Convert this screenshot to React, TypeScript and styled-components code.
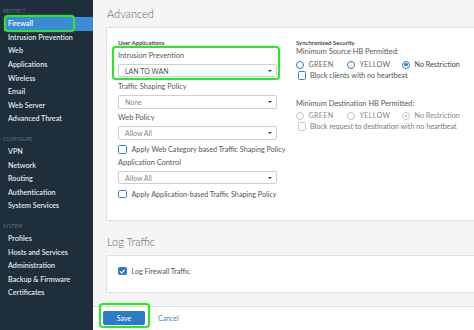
import styled, { createGlobalStyle } from "styled-components";

const GlobalStyle = createGlobalStyle`
  html, body {
    margin: 0;
    padding: 0;
  }
  body {
    width: 474px;
    height: 330px;
    overflow: hidden;
    background: #f5f5f5;
    font-family: Lato, "Open Sans", "Liberation Sans", sans-serif;
  }
  * {
    box-sizing: border-box;
  }
`;

const navGroups = [
  {
    label: "PROTECT",
    items: [
      "Firewall",
      "Intrusion Prevention",
      "Web",
      "Applications",
      "Wireless",
      "Email",
      "Web Server",
      "Advanced Threat",
    ],
  },
  {
    label: "CONFIGURE",
    items: ["VPN", "Network", "Routing", "Authentication", "System Services"],
  },
  {
    label: "SYSTEM",
    items: [
      "Profiles",
      "Hosts and Services",
      "Administration",
      "Backup & Firmware",
      "Certificates",
    ],
  },
];

const App = () => {
  return (
    <>
      <GlobalStyle />
      <Page>
        <Sidebar>
          {navGroups.map((group, gi) => (
            <div key={group.label}>
              <NavLabel $first={gi === 0}>{group.label}</NavLabel>
              {group.items.map((item) =>
                item === "Firewall" ? (
                  <NavItem key={item} $active>
                    {item}
                    <Callout $inset="-2px 18px -1.5px 0" />
                  </NavItem>
                ) : (
                  <NavItem key={item}>{item}</NavItem>
                )
              )}
            </div>
          ))}
        </Sidebar>

        <Main>
          <SectionTitle>Advanced</SectionTitle>
          <Card>
            <Columns>
              <Column>
                <BlockTitle>User Applications</BlockTitle>
                <Marked>
                  <FieldLabel $gap={3.7}>Intrusion Prevention</FieldLabel>
                  <Select $dark>
                    LAN TO WAN
                    <Arrow />
                  </Select>
                  <Callout $inset="-1.7px -3px -2.5px -6.3px" />
                </Marked>
                <FieldLabel>Traffic Shaping Policy</FieldLabel>
                <Select>
                  None
                  <Arrow />
                </Select>
                <FieldLabel>Web Policy</FieldLabel>
                <Select>
                  Allow All
                  <Arrow />
                </Select>
                <CheckRow $gap={4.7}>
                  <Box />
                  Apply Web Category based Traffic Shaping Policy
                </CheckRow>
                <FieldLabel $gap={3.4}>Application Control</FieldLabel>
                <Select>
                  Allow All
                  <Arrow />
                </Select>
                <CheckRow $gap={4.7}>
                  <Box />
                  Apply Application-based Traffic Shaping Policy
                </CheckRow>
              </Column>

              <Column>
                <BlockTitle>Synchronized Security</BlockTitle>
                <FieldLabel $gap={0} $tight>
                  Minimum Source HB Permitted:
                </FieldLabel>
                <RadioRow $gap={3}>
                  <RadioOption $caps>
                    <Radio />
                    GREEN
                  </RadioOption>
                  <RadioOption $caps>
                    <Radio />
                    YELLOW
                  </RadioOption>
                  <RadioOption>
                    <Radio $checked />
                    No Restriction
                  </RadioOption>
                </RadioRow>
                <CheckRow $indent>
                  <Box />
                  Block clients with no heartbeat
                </CheckRow>

                <FieldLabel $gap={19} $tight>
                  Minimum Destination HB Permitted:
                </FieldLabel>
                <RadioRow $gap={2}>
                  <RadioOption $caps $disabled>
                    <Radio $disabled />
                    GREEN
                  </RadioOption>
                  <RadioOption $caps $disabled>
                    <Radio $disabled />
                    YELLOW
                  </RadioOption>
                  <RadioOption $disabled>
                    <Radio $disabled $checked />
                    No Restriction
                  </RadioOption>
                </RadioRow>
                <CheckRow $indent $disabled>
                  <Box $disabled />
                  Block request to destination with no heartbeat
                </CheckRow>
              </Column>
            </Columns>
          </Card>

          <SectionTitle $low>Log Traffic</SectionTitle>
          <LogCard>
            <CheckRow>
              <Box $checked>
                <svg width="7" height="7" viewBox="0 0 10 10">
                  <path
                    d="M2 5.2 L4.2 7.3 L8.2 2.8"
                    fill="none"
                    stroke="#fff"
                    strokeWidth="1.8"
                    strokeLinecap="round"
                    strokeLinejoin="round"
                  />
                </svg>
              </Box>
              Log Firewall Traffic
            </CheckRow>
          </LogCard>

          <Footer>
            <Marked>
              <SaveButton>Save</SaveButton>
              <Callout $inset="-8px -5px -3px -4px" />
            </Marked>
            <CancelLink>Cancel</CancelLink>
          </Footer>
        </Main>
      </Page>
    </>
  );
};
export default App;

// styles
const Page = styled.div`
  display: grid;
  grid-template-columns: 93px 1fr;
  width: 474px;
  height: 330px;
`;

const Sidebar = styled.nav`
  background: #1e2e3b;
  padding-top: 5px;
  overflow: hidden;
`;

const NavLabel = styled.div<{ $first?: boolean }>`
  height: 12px;
  margin-top: ${(p) => (p.$first ? 0 : 7)}px;
  padding-left: 3px;
  display: flex;
  align-items: center;
  font-size: 4.8px;
  letter-spacing: 0.2px;
  color: #647482;
`;

const NavItem = styled.div<{ $active?: boolean }>`
  position: relative;
  height: 13.6px;
  margin-left: 4px;
  padding-left: 4px;
  display: flex;
  align-items: center;
  font-size: 7.2px;
  font-weight: 600;
  white-space: nowrap;
  color: ${(p) => (p.$active ? "#ffffff" : "#e3e8ec")};
  background: ${(p) => (p.$active ? "#3a8bd4" : "transparent")};
`;

const Callout = styled.span<{ $inset: string }>`
  position: absolute;
  inset: ${(p) => p.$inset};
  border: 2px solid #34e034;
  border-radius: 4px;
  box-shadow: 0 0 2px rgba(60, 230, 60, 0.6);
  pointer-events: none;
`;

const Main = styled.main`
  display: flex;
  flex-direction: column;
  background: #f5f5f5;
  min-width: 0;
`;

const SectionTitle = styled.h2<{ $low?: boolean }>`
  margin: 0;
  height: ${(p) => (p.$low ? 34 : 27)}px;
  padding: ${(p) => (p.$low ? "6px" : "0")} 0 0 14px;
  display: flex;
  align-items: center;
  font-size: 11px;
  font-weight: 300;
  color: #5d5d5d;
`;

const Card = styled.section`
  margin-left: 13px;
  height: 194px;
  padding: 10.3px 0 0 11px;
  background: #ffffff;
  border: 1px solid #e2e2e2;
  border-right: none;
`;

const Columns = styled.div`
  display: grid;
  grid-template-columns: 159px 1fr;
  column-gap: 19px;
`;

const Column = styled.div`
  display: flex;
  flex-direction: column;
`;

const BlockTitle = styled.div`
  height: 9px;
  line-height: 9px;
  font-size: 6px;
  font-weight: 600;
  color: #333;
  white-space: nowrap;
`;

const Marked = styled.div`
  position: relative;
  display: flex;
  flex-direction: column;
`;

const FieldLabel = styled.div<{ $gap?: number; $tight?: boolean }>`
  height: ${(p) => (p.$tight ? 9 : 10)}px;
  line-height: ${(p) => (p.$tight ? 9 : 10)}px;
  margin-top: ${(p) => p.$gap ?? 4.7}px;
  font-size: 7.4px;
  color: #585858;
  white-space: nowrap;
`;

const Select = styled.div<{ $dark?: boolean }>`
  position: relative;
  height: 13.5px;
  margin-top: 3px;
  padding-left: 6px;
  display: flex;
  align-items: center;
  background: #fff;
  border: 1px solid #cfcfcf;
  border-radius: 2px;
  font-size: 7px;
  color: ${(p) => (p.$dark ? "#555" : "#888")};
`;

const Arrow = styled.span`
  position: absolute;
  right: 4px;
  top: 50%;
  margin-top: -1px;
  border-left: 2.2px solid transparent;
  border-right: 2.2px solid transparent;
  border-top: 2.6px solid #3a3a3a;
`;

const CheckRow = styled.div<{
  $gap?: number;
  $disabled?: boolean;
  $indent?: boolean;
}>`
  height: 10px;
  margin-top: ${(p) => p.$gap ?? 0}px;
  padding-left: ${(p) => (p.$indent ? 1.5 : 0)}px;
  display: flex;
  align-items: center;
  gap: ${(p) => (p.$indent ? 4 : 5)}px;
  font-size: 7.2px;
  color: ${(p) => (p.$disabled ? "#7a7a7a" : "#555")};
  white-space: nowrap;
`;

const Box = styled.span<{ $checked?: boolean; $disabled?: boolean }>`
  flex: none;
  width: 8.5px;
  height: 8.5px;
  display: flex;
  align-items: center;
  justify-content: center;
  border-radius: 1.5px;
  border: 1px solid ${(p) => (p.$disabled ? "#c9c9c9" : "#3a80c4")};
  background: ${(p) => (p.$checked ? "#2b78c2" : "#fff")};
`;

const RadioRow = styled.div<{ $gap: number }>`
  height: 11px;
  margin-top: ${(p) => p.$gap}px;
  display: grid;
  grid-template-columns: 51px 55px auto;
  align-items: center;
`;

const RadioOption = styled.div<{ $disabled?: boolean; $caps?: boolean }>`
  display: flex;
  align-items: center;
  gap: 4.5px;
  font-size: 7.2px;
  letter-spacing: ${(p) => (p.$caps ? 0.3 : 0)}px;
  white-space: nowrap;
  color: ${(p) => (p.$disabled ? "#8a8a8a" : p.$caps ? "#666" : "#444")};
`;

const Radio = styled.span<{ $checked?: boolean; $disabled?: boolean }>`
  flex: none;
  width: 8px;
  height: 8px;
  border-radius: 50%;
  display: flex;
  align-items: center;
  justify-content: center;
  border: 1.2px solid ${(p) => (p.$disabled ? "#c4c4c4" : "#2f7cc2")};
  background: #fff;

  &::after {
    content: "";
    display: ${(p) => (p.$checked ? "block" : "none")};
    width: ${(p) => (p.$disabled ? 2 : 3.4)}px;
    height: ${(p) => (p.$disabled ? 2 : 3.4)}px;
    border-radius: 50%;
    background: ${(p) => (p.$disabled ? "#b5b5b5" : "#2f7cc2")};
  }
`;

const LogCard = styled.section`
  margin-left: 13px;
  height: 38px;
  padding: 10px 0 0 11px;
  background: #ffffff;
  border: 1px solid #e2e2e2;
  border-right: none;
`;

const Footer = styled.footer`
  flex: 1;
  margin-top: 13px;
  padding: 4px 0 0 10px;
  display: flex;
  align-items: flex-start;
  gap: 13px;
  background: #ffffff;
  border-top: 1px solid #e0e0e0;
`;

const SaveButton = styled.button`
  width: 42px;
  height: 14px;
  padding: 0;
  border: none;
  border-radius: 2px;
  background: #2b7cc2;
  color: #fff;
  font-family: inherit;
  font-size: 7px;
`;

const CancelLink = styled.a`
  height: 14px;
  display: flex;
  align-items: center;
  font-size: 7px;
  color: #3b86c8;
  text-decoration: none;
`;
